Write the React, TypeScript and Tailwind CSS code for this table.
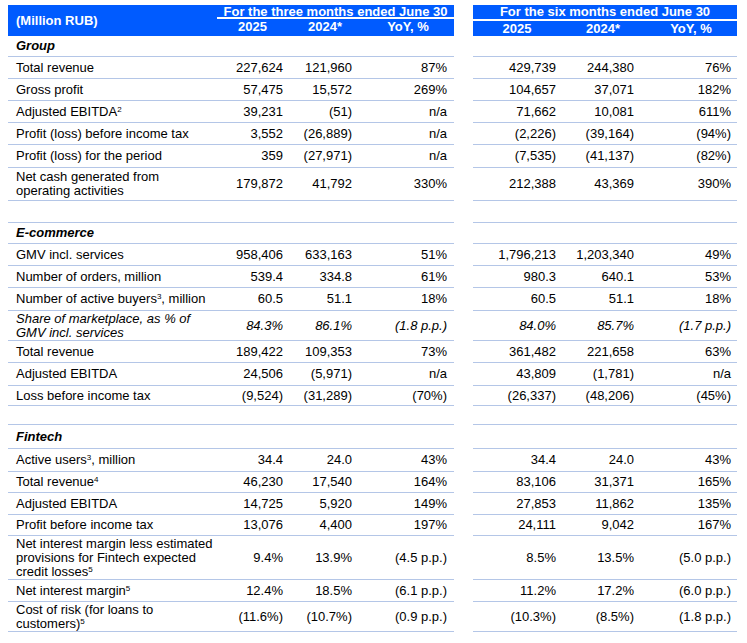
import React from "react";

type Cells = [React.ReactNode, React.ReactNode, React.ReactNode, React.ReactNode, React.ReactNode, React.ReactNode];

interface RowProps {
  label?: React.ReactNode;
  cells?: Cells;
  h: string;
  italic?: boolean;
  section?: boolean;
}

const Sup = ({ n }: { n: string }) => (
  <sup className="text-[8px] leading-none">{n}</sup>
);

const Row = ({ label, cells, h, italic, section }: RowProps) => {
  const txt = italic ? "italic" : "";
  return (
    <div className={`flex ${h}`}>
      <div className="flex w-[446px] border-b border-[#b4c6e7]">
        <div
          className={`w-[209px] pl-2 flex items-center leading-[14px] whitespace-nowrap ${
            section ? "font-bold italic" : txt
          }`}
        >
          <div>{label}</div>
        </div>
        {cells && (
          <>
            <div className={`w-[71px] flex items-center justify-end pr-[5px] ${txt}`}>{cells[0]}</div>
            <div className={`w-[74px] flex items-center justify-end pr-[10px] ${txt}`}>{cells[1]}</div>
            <div className={`w-[92px] flex items-center justify-end pr-[7px] ${txt}`}>{cells[2]}</div>
          </>
        )}
      </div>
      <div className="w-[19px]" />
      <div className="flex w-[264px] border-b border-[#b4c6e7]">
        {cells && (
          <>
            <div className={`w-[88px] flex items-center justify-end pr-[5px] ${txt}`}>{cells[3]}</div>
            <div className={`w-[84px] flex items-center justify-end pr-[11px] ${txt}`}>{cells[4]}</div>
            <div className={`w-[92px] flex items-center justify-end pr-[6px] ${txt}`}>{cells[5]}</div>
          </>
        )}
      </div>
    </div>
  );
};

const App = () => {
  return (
    <div
      className="w-[747px] h-[643px] bg-white pt-[5px] pl-2 text-[13px] text-black"
      style={{ fontFamily: '"Liberation Sans", Arial, sans-serif' }}
    >
      {/* header */}
      <div className="flex h-[31px] text-white font-bold leading-[14px]">
        <div className="w-[209px] bg-[#005bff] pl-2 flex items-center">(Million RUB)</div>
        <div className="w-[237px] flex flex-col bg-[#005bff]">
          <div className="h-[14px] text-center border-b-2 border-white">For the three months ended June 30</div>
          <div className="flex h-[15px] items-center">
            <div className="w-[71px] text-center">2025</div>
            <div className="w-[74px] text-center">2024*</div>
            <div className="w-[92px] text-center">YoY, %</div>
          </div>
        </div>
        <div className="w-[19px]" />
        <div className="w-[264px] flex flex-col">
          <div className="h-[14px] bg-[#005bff] text-center">For the six months ended June 30</div>
          <div className="h-[2px]" />
          <div className="flex h-[15px] items-center bg-[#005bff]">
            <div className="w-[88px] text-center">2025</div>
            <div className="w-[84px] text-center">2024*</div>
            <div className="w-[92px] text-center">YoY, %</div>
          </div>
        </div>
      </div>

      <Row h="h-[21px]" section label="Group" />
      <Row h="h-[22px]" label="Total revenue" cells={["227,624", "121,960", "87%", "429,739", "244,380", "76%"]} />
      <Row h="h-[22px]" label="Gross profit" cells={["57,475", "15,572", "269%", "104,657", "37,071", "182%"]} />
      <Row
        h="h-[22px]"
        label={<>Adjusted EBITDA<Sup n="2" /></>}
        cells={["39,231", "(51)", "n/a", "71,662", "10,081", "611%"]}
      />
      <Row
        h="h-[22px]"
        label="Profit (loss) before income tax"
        cells={["3,552", "(26,889)", "n/a", "(2,226)", "(39,164)", "(94%)"]}
      />
      <Row
        h="h-[23px]"
        label="Profit (loss) for the period"
        cells={["359", "(27,971)", "n/a", "(7,535)", "(41,137)", "(82%)"]}
      />
      <Row
        h="h-[33px]"
        label={<>Net cash generated from<br />operating activities</>}
        cells={["179,872", "41,792", "330%", "212,388", "43,369", "390%"]}
      />
      <Row h="h-[22px]" />

      <Row h="h-[21px]" section label="E-commerce" />
      <Row
        h="h-[22px]"
        label="GMV incl. services"
        cells={["958,406", "633,163", "51%", "1,796,213", "1,203,340", "49%"]}
      />
      <Row
        h="h-[22px]"
        label="Number of orders, million"
        cells={["539.4", "334.8", "61%", "980.3", "640.1", "53%"]}
      />
      <Row
        h="h-[23px]"
        label={<>Number of active buyers<Sup n="3" />, million</>}
        cells={["60.5", "51.1", "18%", "60.5", "51.1", "18%"]}
      />
      <Row
        h="h-[30px]"
        italic
        label={<>Share of marketplace, as % of<br />GMV incl. services</>}
        cells={["84.3%", "86.1%", "(1.8 p.p.)", "84.0%", "85.7%", "(1.7 p.p.)"]}
      />
      <Row
        h="h-[22px]"
        label="Total revenue"
        cells={["189,422", "109,353", "73%", "361,482", "221,658", "63%"]}
      />
      <Row
        h="h-[23px]"
        label="Adjusted EBITDA"
        cells={["24,506", "(5,971)", "n/a", "43,809", "(1,781)", "n/a"]}
      />
      <Row
        h="h-[20px]"
        label="Loss before income tax"
        cells={["(9,524)", "(31,289)", "(70%)", "(26,337)", "(48,206)", "(45%)"]}
      />
      <Row h="h-[19px]" />

      <Row h="h-[24px]" section label="Fintech" />
      <Row
        h="h-[23px]"
        label={<>Active users<Sup n="3" />, million</>}
        cells={["34.4", "24.0", "43%", "34.4", "24.0", "43%"]}
      />
      <Row
        h="h-[21px]"
        label={<>Total revenue<Sup n="4" /></>}
        cells={["46,230", "17,540", "164%", "83,106", "31,371", "165%"]}
      />
      <Row
        h="h-[22px]"
        label="Adjusted EBITDA"
        cells={["14,725", "5,920", "149%", "27,853", "11,862", "135%"]}
      />
      <Row
        h="h-[21px]"
        label="Profit before income tax"
        cells={["13,076", "4,400", "197%", "24,111", "9,042", "167%"]}
      />
      <Row
        h="h-[44px]"
        label={
          <>
            Net interest margin less estimated
            <br />
            provisions for Fintech expected
            <br />
            credit losses<Sup n="5" />
          </>
        }
        cells={["9.4%", "13.9%", "(4.5 p.p.)", "8.5%", "13.5%", "(5.0 p.p.)"]}
      />
      <Row
        h="h-[22px]"
        label={<>Net interest margin<Sup n="5" /></>}
        cells={["12.4%", "18.5%", "(6.1 p.p.)", "11.2%", "17.2%", "(6.0 p.p.)"]}
      />
      <Row
        h="h-[30px]"
        label={<>Cost of risk (for loans to<br />customers)<Sup n="5" /></>}
        cells={["(11.6%)", "(10.7%)", "(0.9 p.p.)", "(10.3%)", "(8.5%)", "(1.8 p.p.)"]}
      />
    </div>
  );
};

export default App;
